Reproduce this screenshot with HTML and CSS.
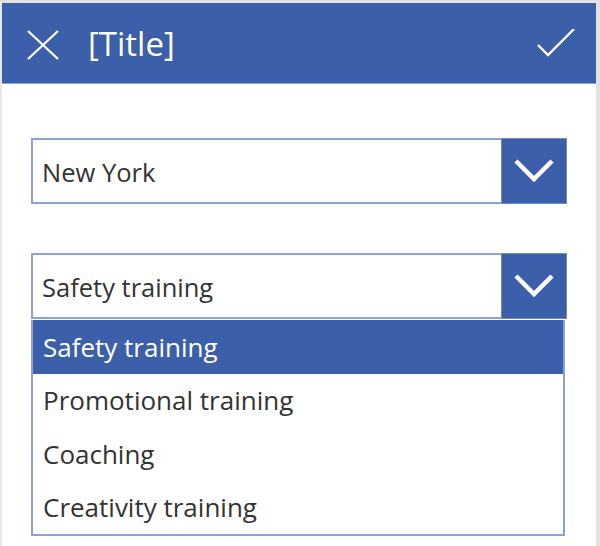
FILE: index.html
```html
<!DOCTYPE html>
<html lang="en">
<head>
    <meta charset="UTF-8">
    <title>Edit form</title>
    <link rel="stylesheet" href="styles.css">
</head>
<body>
    <div class="screen">
        <div class="header">
            <svg class="icon-close" width="32" height="30" viewBox="0 0 32 30">
                <path d="M1 1 L31 29 M31 1 L1 29" stroke="#fff" stroke-width="2.2" fill="none"/>
            </svg>
            <span class="title">[Title]</span>
            <svg class="icon-check" width="38" height="30" viewBox="0 0 38 30">
                <path d="M1 16 L11 26 L37 0" stroke="#fff" stroke-width="2.4" fill="none"/>
            </svg>
        </div>
        <div class="content">
            <div class="dropdown first">
                <span class="value">New York</span>
                <span class="toggle">
                    <svg width="40" height="24" viewBox="0 0 40 24"><path d="M2 2 L20 20 L38 2" stroke="#fff" stroke-width="4.5" fill="none"/></svg>
                </span>
            </div>
            <div class="dropdown second">
                <span class="value">Safety training</span>
                <span class="toggle">
                    <svg width="40" height="24" viewBox="0 0 40 24"><path d="M2 2 L20 20 L38 2" stroke="#fff" stroke-width="4.5" fill="none"/></svg>
                </span>
            </div>
            <ul class="options">
                <li class="selected">Safety training</li>
                <li>Promotional training</li>
                <li>Coaching</li>
                <li>Creativity training</li>
            </ul>
        </div>
    </div>
</body>
</html>
```

FILE: styles.css
```css
body {
    margin: 0;
    font-family: "Open Sans", "Noto Sans", sans-serif;
    background: #fff;
}
.screen {
    border-top: 3px solid #e2e2e2;
    border-left: 2px solid #e8e8e8;
    border-right: 4px solid #e2e2e2;
    height: 543px;
    background: #fff;
}
.header {
    background-color: #3c5fa9;
    height: 80px;
    border-bottom: 1px solid #8ea2d3;
    display: flex;
    align-items: center;
    padding: 0 21px 0 25px;
}
.icon-close {
    margin-top: 4px;
}
.title {
    color: #fff;
    font-size: 33px;
    margin-left: 29px;
    flex: 1;
}
.icon-check {
    margin-top: 2px;
}
.content {
    padding: 54px 29px 0 29px;
}
.dropdown {
    display: flex;
    height: 62px;
    border: 2px solid #8da1d4;
    background: #fff;
}
.dropdown.second {
    margin-top: 49px;
}
.value {
    flex: 1;
    display: flex;
    align-items: center;
    padding-left: 9px;
    font-size: 25.5px;
    color: #333;
    padding-top: 2px;
}
.toggle {
    margin: -2px -2px -2px 0;
    height: 66px;
    width: 66px;
    background-color: #3c5fa9;
    border: 1px solid #6f88c4;
    box-sizing: border-box;
    display: flex;
    align-items: center;
    justify-content: center;
}
.options {
    list-style: none;
    margin: 0 2px 0 0;
    padding: 0;
    border: 2px solid #8da1d4;
    border-top: none;
}
.options li {
    height: 53.5px;
    display: flex;
    align-items: center;
    padding-left: 10px;
    font-size: 26px;
    color: #333;
}
.options li.selected {
    background-color: #3c5fa9;
    color: #fff;
    margin-top: 1px;
}
```
